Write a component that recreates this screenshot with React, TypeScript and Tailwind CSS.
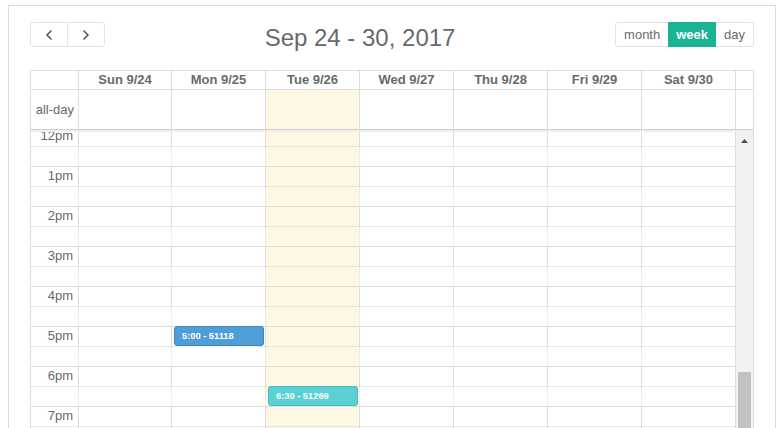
import React from 'react'

const days = ['Sun 9/24', 'Mon 9/25', 'Tue 9/26', 'Wed 9/27', 'Thu 9/28', 'Fri 9/29', 'Sat 9/30']
const TODAY = 2

const hours = ['12pm', '1pm', '2pm', '3pm', '4pm', '5pm', '6pm', '7pm', '8pm', '9pm']

type CalEvent = { day: number; slot: number; label: string; color: string }

// slot index = hour index * 2 + half
const events: CalEvent[] = [
  { day: 1, slot: 10, label: '5:00 - 51118', color: 'blue' },
  { day: 2, slot: 13, label: '6:30 - 51269', color: 'teal' },
]

function Chevron({ dir }: { dir: 'left' | 'right' }) {
  return (
    <svg width="8" height="10" viewBox="0 0 8 10" fill="none">
      <polyline
        points={dir === 'left' ? '6,1 2,5 6,9' : '2,1 6,5 2,9'}
        stroke="#555"
        strokeWidth="1.6"
        strokeLinecap="round"
        strokeLinejoin="round"
      />
    </svg>
  )
}

function Toolbar() {
  return (
    <div className="flex items-start h-[25px]">
      <div className="flex h-[25px] border border-[#e2e4e6] rounded-[3px] bg-white">
        <button className="w-[36px] flex items-center justify-center">
          <Chevron dir="left" />
        </button>
        <button className="w-[37px] flex items-center justify-center border-l border-[#e2e4e6]">
          <Chevron dir="right" />
        </button>
      </div>
      <h2 className="flex-1 text-center text-[24px] leading-[26px] mt-[3px] text-[#676a6c] font-normal">
        Sep 24 - 30, 2017
      </h2>
      <div className="flex h-[25px] text-[13px] text-[#676a6c]">
        <button className="px-[8px] border border-r-0 border-[#e2e4e6] rounded-l-[3px] bg-white">month</button>
        <button className="px-[8px] bg-[#1ab394] text-white font-bold">week</button>
        <button className="px-[8px] border border-l-0 border-[#e2e4e6] rounded-r-[3px] bg-white">day</button>
      </div>
    </div>
  )
}

function EventChip({ ev }: { ev: CalEvent }) {
  const cls =
    ev.color === 'blue'
      ? 'bg-[#4f9ed7] border-[#3a88c2]'
      : 'bg-[#5bd0d4] border-[#45bcc1]'
  return (
    <div
      className={`absolute top-[-1px] left-[2px] right-[1px] h-[20px] z-10 rounded-[3px] border ${cls} text-white font-bold text-[9.3px] leading-[18px] pl-[7px] whitespace-nowrap overflow-hidden`}
    >
      {ev.label}
    </div>
  )
}

function SlotRow({ hourIdx, half }: { hourIdx: number; half: number }) {
  const slot = hourIdx * 2 + half
  const line = half === 0 ? 'border-t border-solid border-[#ddd]' : 'border-t border-dotted border-[#d4d4d4]'
  return (
    <>
      <div className={`h-[20px] ${line} text-right pr-[5px] text-[13px] leading-[17px] text-[#676a6c] whitespace-nowrap`}>
        {half === 0 ? hours[hourIdx] : ''}
      </div>
      {days.map((d, i) => {
        const ev = events.find((e) => e.day === i && e.slot === slot)
        return (
          <div
            key={d}
            className={`relative h-[20px] ${line} border-l border-l-solid border-l-[#ddd] ${i === TODAY ? 'bg-[#fcf8e3]' : ''}`}
          >
            {ev && <EventChip ev={ev} />}
          </div>
        )
      })}
    </>
  )
}

export default function App() {
  return (
    <div className="min-h-screen bg-white" style={{ fontFamily: '"Liberation Sans", Arial, sans-serif' }}>
      <div className="ml-[8px] mt-[5px] w-[768px] border border-[#dcdcdc] px-[21px] pt-[16px] pb-[20px]">
        <Toolbar />
        <div className="mt-[23px] border border-[#ddd]">
          {/* header */}
          <div className="grid grid-cols-[47px_93px_repeat(6,94px)_18px] h-[19px] border-b border-[#ddd]">
            <div />
            {days.map((d) => (
              <div key={d} className="border-l border-[#ddd] text-center text-[13px] font-bold text-[#676a6c] leading-[18px]">
                {d}
              </div>
            ))}
            <div className="border-l border-[#ddd]" />
          </div>
          {/* all-day */}
          <div className="grid grid-cols-[47px_93px_repeat(6,94px)_18px] h-[39px]">
            <div className="flex items-center justify-end pr-[4px] text-[13px] text-[#676a6c]">all-day</div>
            {days.map((d, i) => (
              <div key={d} className={`border-l border-[#ddd] ${i === TODAY ? 'bg-[#fcf8e3]' : ''}`} />
            ))}
            <div className="border-l border-[#ddd]" />
          </div>
          <div className="h-[3px] border-t border-[#d0d0d0] bg-[#eee]" />
          {/* body */}
          <div className="flex h-[330px] overflow-hidden">
            <div className="flex-1 overflow-hidden">
              <div className="grid grid-cols-[47px_93px_repeat(6,94px)] mt-[-6px]">
                {hours.map((h, hi) => (
                  <React.Fragment key={h}>
                    <SlotRow hourIdx={hi} half={0} />
                    <SlotRow hourIdx={hi} half={1} />
                  </React.Fragment>
                ))}
              </div>
            </div>
            <div className="w-[18px] border-l border-[#ddd] bg-[#f1f1f1] flex flex-col">
              <div className="h-[17px] flex items-center justify-center">
                <svg width="7" height="4" viewBox="0 0 7 4">
                  <polygon points="3.5,0 7,4 0,4" fill="#505050" />
                </svg>
              </div>
              <div className="h-[223px]" />
              <div className="flex-1 mx-[2px] bg-[#c1c1c1]" />
            </div>
          </div>
        </div>
      </div>
    </div>
  )
}
